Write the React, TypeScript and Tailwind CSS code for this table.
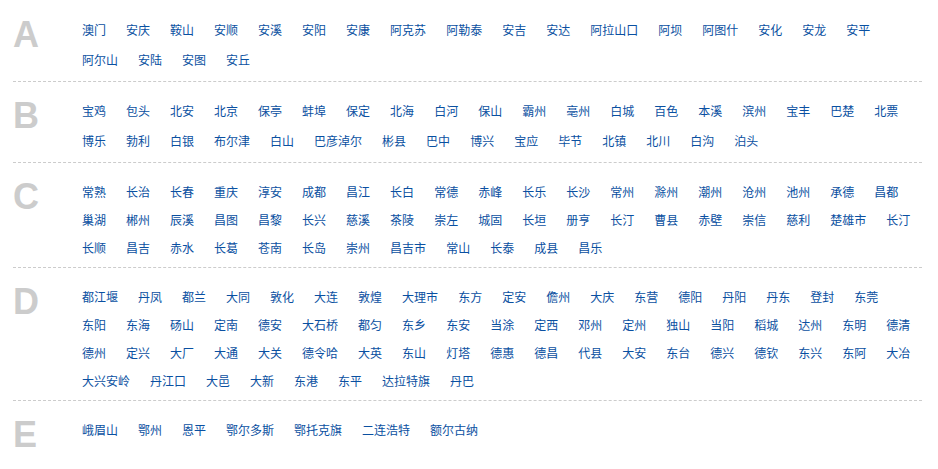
const groups: { letter: string; cities: string[] }[] = [
  {
    letter: "A",
    cities: [
      "澳门", "安庆", "鞍山", "安顺", "安溪", "安阳", "安康", "阿克苏", "阿勒泰", "安吉", "安达",
      "阿拉山口", "阿坝", "阿图什", "安化", "安龙", "安平", "阿尔山", "安陆", "安图", "安丘",
    ],
  },
  {
    letter: "B",
    cities: [
      "宝鸡", "包头", "北安", "北京", "保亭", "蚌埠", "保定", "北海", "白河", "保山", "霸州",
      "亳州", "白城", "百色", "本溪", "滨州", "宝丰", "巴楚", "北票", "博乐", "勃利", "白银",
      "布尔津", "白山", "巴彦淖尔", "彬县", "巴中", "博兴", "宝应", "毕节", "北镇", "北川",
      "白沟", "泊头",
    ],
  },
  {
    letter: "C",
    cities: [
      "常熟", "长治", "长春", "重庆", "淳安", "成都", "昌江", "长白", "常德", "赤峰", "长乐",
      "长沙", "常州", "滁州", "潮州", "沧州", "池州", "承德", "昌都", "巢湖", "郴州", "辰溪",
      "昌图", "昌黎", "长兴", "慈溪", "茶陵", "崇左", "城固", "长垣", "册亨", "长汀", "曹县",
      "赤壁", "崇信", "慈利", "楚雄市", "长汀", "长顺", "昌吉", "赤水", "长葛", "苍南", "长岛",
      "崇州", "昌吉市", "常山", "长泰", "成县", "昌乐",
    ],
  },
  {
    letter: "D",
    cities: [
      "都江堰", "丹凤", "都兰", "大同", "敦化", "大连", "敦煌", "大理市", "东方", "定安", "儋州",
      "大庆", "东营", "德阳", "丹阳", "丹东", "登封", "东莞", "东阳", "东海", "砀山", "定南",
      "德安", "大石桥", "都匀", "东乡", "东安", "当涂", "定西", "邓州", "定州", "独山", "当阳",
      "稻城", "达州", "东明", "德清", "德州", "定兴", "大厂", "大通", "大关", "德令哈", "大英",
      "东山", "灯塔", "德惠", "德昌", "代县", "大安", "东台", "德兴", "德钦", "东兴", "东阿",
      "大冶", "大兴安岭", "丹江口", "大邑", "大新", "东港", "东平", "达拉特旗", "丹巴",
    ],
  },
  {
    letter: "E",
    cities: ["峨眉山", "鄂州", "恩平", "鄂尔多斯", "鄂托克旗", "二连浩特", "额尔古纳"],
  },
];

export default function App() {
  return (
    <div className="min-h-[469px] bg-white pt-px pl-[13px] pr-[16px] font-['Noto_Sans_CJK_SC',sans-serif]">
      {groups.map((g) => (
        <dl key={g.letter} className="flex border-b border-dashed border-[#cccccc] pt-[15px] pb-[5px]">
          {/* letter column */}
          <dt className="w-[69px] h-[60px] shrink-0 text-[36px] leading-[38px] font-bold text-[#cccccc] font-['Liberation_Sans',Arial,sans-serif]">
            {g.letter}
          </dt>
          <dd className="flex flex-1 flex-wrap gap-x-5 pr-1 text-[12px] leading-[28px]">
            {g.cities.map((c, i) => (
              <a key={i} href="#" className="text-[#0a50a1] whitespace-nowrap">
                {c}
              </a>
            ))}
          </dd>
        </dl>
      ))}
    </div>
  );
}
